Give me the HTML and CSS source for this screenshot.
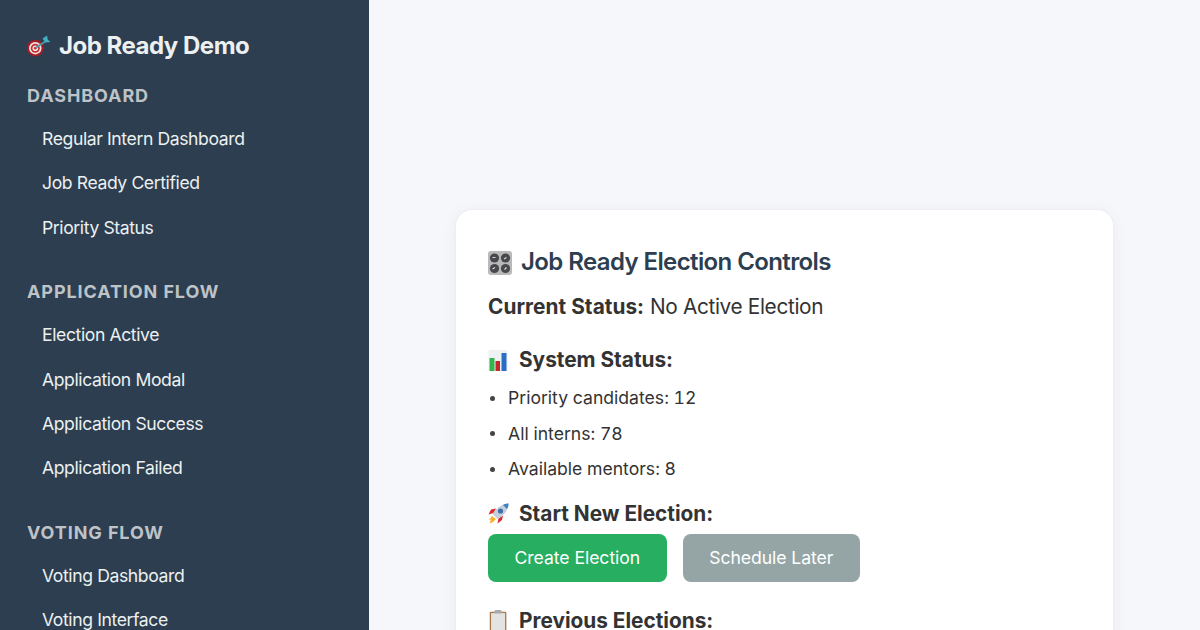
FILE: index.html
```html
<!DOCTYPE html>
<html lang="en">
<head>
<meta charset="utf-8">
<title>Job Ready Demo</title>
<link rel="stylesheet" href="styles.css">
</head>
<body>
<div class="app">
  <aside class="sidebar">
    <h1 class="brand">
      <svg class="brand-icon" viewBox="0 0 24 22" aria-hidden="true">
        <circle cx="8.300" cy="13.200" r="8.300" fill="#a51d24"/>
        <circle cx="8.300" cy="13.200" r="6.200" fill="#efe3df"/>
        <circle cx="8.300" cy="13.200" r="4.500" fill="#cc2b31"/>
        <circle cx="8.300" cy="13.200" r="2.800" fill="#f3ecec"/>
        <circle cx="8.300" cy="13.200" r="1.400" fill="#cc2b31"/>
        <path d="M8.500 13 19 6" stroke="#4f97a8" stroke-width="1.800"/>
        <path d="M15.500 3.500 18.500 7.500 23.500 7 20.800 4.800 20 .5Z" fill="#43aebd"/>
      </svg>
      <span>Job Ready Demo</span>
    </h1>
    <section class="group">
      <h2 class="group-title">Dashboard</h2>
      <a class="nav-item">Regular Intern Dashboard</a>
      <a class="nav-item">Job Ready Certified</a>
      <a class="nav-item">Priority Status</a>
    </section>
    <section class="group">
      <h2 class="group-title">Application Flow</h2>
      <a class="nav-item">Election Active</a>
      <a class="nav-item">Application Modal</a>
      <a class="nav-item">Application Success</a>
      <a class="nav-item">Application Failed</a>
    </section>
    <section class="group">
      <h2 class="group-title">Voting Flow</h2>
      <a class="nav-item">Voting Dashboard</a>
      <a class="nav-item">Voting Interface</a>
    </section>
  </aside>
  <main class="main">
    <div class="card">
      <h2 class="card-title">
        <svg class="title-icon" viewBox="0 0 24 24" aria-hidden="true">
          <rect width="24" height="24" rx="3" fill="#b9b9b9"/>
          <circle cx="6.500" cy="7" r="4.600" fill="#47494c"/>
          <circle cx="17.500" cy="7" r="4.600" fill="#47494c"/>
          <circle cx="6.500" cy="17.500" r="4.600" fill="#47494c"/>
          <circle cx="17.500" cy="17.500" r="4.600" fill="#47494c"/>
          <path d="M4.500 6.500H7.500M16 8 18.500 6.500M4.500 18 7 16.500M16.500 18.500 18.500 16.500" stroke="#d6d6d6" stroke-width="1.200"/>
        </svg>
        <span>Job Ready Election Controls</span>
      </h2>
      <p class="status"><strong>Current Status:</strong> <span class="status-value">No Active Election</span></p>
      <h3 class="sub first">
        <svg class="sub-icon" viewBox="0 0 20 21" aria-hidden="true">
          <rect width="19" height="21" fill="#eef2f5"/>
          <rect x="1" y="8" width="5" height="13" fill="#35b44a"/>
          <rect x="7" y="11" width="4.500" height="10" fill="#c8252c"/>
          <rect x="13" y="3" width="5" height="18" fill="#2b6cc4"/>
        </svg>
        <span>System Status:</span>
      </h3>
      <ul class="stats">
        <li>Priority candidates: 12</li>
        <li>All interns: 78</li>
        <li>Available mentors: 8</li>
      </ul>
      <h3 class="sub">
        <svg class="sub-icon" viewBox="0 0 21 21" aria-hidden="true">
          <path d="M4 13 1 17 3 16.500 1.500 20.500 5 19 8 16Z" fill="#f7b32b"/>
          <path d="M8 5.500 3 6.500 .5 11.500 5.500 10ZM15 12.500 14 17 9.500 20.500 10.500 15.500Z" fill="#d92d27"/>
          <path d="M20.500 .5C14.500 .5 9 4.500 4.500 11L9.500 16C16 12.500 20.500 7 20.500 .5Z" fill="#c4cfdb"/>
          <path d="M20.500 .5C18.500 .5 16.500 1 15 2L19 6C20 4.500 20.500 2.500 20.500 .5Z" fill="#3f7fc4"/>
          <circle cx="12.500" cy="8" r="2.600" fill="#3f6fa8"/>
        </svg>
        <span>Start New Election:</span>
      </h3>
      <div class="actions">
        <button class="btn btn-green" type="button">Create Election</button>
        <button class="btn btn-grey" type="button">Schedule Later</button>
      </div>
      <h3 class="sub prev">
        <svg class="sub-icon" viewBox="0 0 20 24" aria-hidden="true">
          <rect x="0" y="2" width="19" height="22" rx="1.500" fill="#a9784a"/>
          <rect x="1.500" y="3.500" width="16" height="20" fill="#e3e3e1"/>
          <rect x="5.500" y="0" width="8" height="4" rx="1" fill="#a7acb0"/>
        </svg>
        <span>Previous Elections:</span>
      </h3>
    </div>
  </main>
</div>
</body>
</html>
```

FILE: styles.css
```css
* { box-sizing: border-box; }
html, body { margin: 0; height: 100%; overflow: hidden; }
body { font-family: Inter, "Liberation Sans", sans-serif; color: #333; background: #f5f7fa; }
.app { display: flex; height: 630px; overflow: hidden; }
.sidebar { flex: 0 0 369px; background: #2c3e50; color: #fff; padding: 32px 27px 0; overflow: hidden; }
.brand { display: flex; align-items: center; gap: 8px; margin: 0 0 25px; font-size: 24px; line-height: 28px; font-weight: 700; letter-spacing: -.5px; color: #ecf0f1; }
.brand-icon { width: 24px; height: 22px; }
.group { margin-bottom: 31px; }
.group-title { margin: 0 0 10px; font-size: 18px; line-height: 22px; font-weight: 700; letter-spacing: .9px; text-transform: uppercase; color: #bdc3c7; }
.nav-item { display: block; padding: 0 15px; font-size: 17.6px; line-height: 44.400px; letter-spacing: -.4px; color: #ecf0f1; }
.main { flex: 1; padding: 210px 87px 0; }
.card { background: #fff; border-radius: 16px; padding: 32px; height: 600px; box-shadow: 0 0 0 1px #edf0f3, 0 2px 16px rgba(0,0,0,.06); }
.card-title { display: flex; align-items: center; gap: 9px; margin: 0 0 10px; font-size: 24px; line-height: 40px; font-weight: 600; letter-spacing: -.6px; color: #2c3e50; }
.title-icon { width: 24px; height: 24px; margin-top: 1px; }
.status { margin: 0 0 23px; font-size: 20.800px; line-height: 30px; }
.status strong { font-weight: 700; letter-spacing: .05px; }
.status-value { letter-spacing: -.35px; }
.sub { display: flex; align-items: center; gap: 10px; margin: 0; font-size: 20.800px; line-height: 30px; font-weight: 700; }
.sub-icon { width: 21px; height: 21px; }
.stats { list-style: none; margin: 0; padding: 5px 0 0 20px; font-size: 17.6px; font-variant-numeric: tabular-nums; }
.stats li { position: relative; line-height: 35.500px; }
.stats li::before { content: ""; position: absolute; left: -18px; top: 15.500px; width: 5px; height: 5px; border-radius: 50%; background: #444; }
.stats + .sub { margin-top: 12px; }
.actions { display: flex; gap: 16px; margin: 5px 0 0; }
.btn { border: 0; border-radius: 8px; height: 48px; padding: 0 26.500px; font: 400 17.6px Inter, sans-serif; letter-spacing: -.05px; color: #fff; }
.btn-green { background: #27ae60; }
.btn-grey { background: #95a5a6; }
.prev { margin-top: 24px; }
```
